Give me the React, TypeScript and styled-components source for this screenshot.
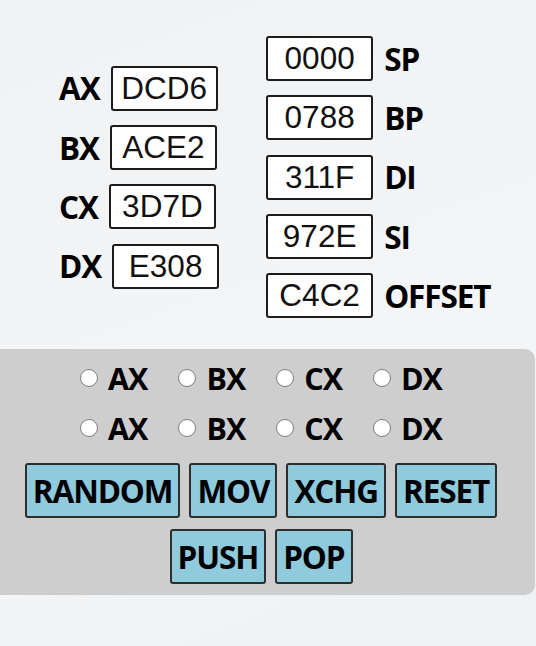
import React from "react";
import styled, { createGlobalStyle } from "styled-components";

const GlobalStyle = createGlobalStyle`
    html, body {
        margin: 0;
        padding: 0;
        background-color: #f1f3f5;
        overflow: hidden;
    }
    body {
        font-family: "Open Sans", "Liberation Sans", sans-serif;
        color: #000;
    }
`

const Page = styled.div`
    width: 536px;
    height: 646px;
    background: linear-gradient(160deg, #f0f2f4 0%, #f3f5f7 60%, #eff2f4 100%);
    padding-top: 36px;
    box-sizing: border-box;
`

const Registers = styled.div`
    display: flex;
    align-items: center;
    gap: 47px;
    padding-left: 59px;
`

const Column = styled.div`
    display: flex;
    flex-direction: column;
    gap: 14.3px;
`

const RegRow = styled.div`
    display: flex;
    align-items: center;
    gap: 11px;
    height: 45px;
`

const RegName = styled.span`
    font-family: "Open Sans", sans-serif;
    font-weight: 700;
    font-size: 31.5px;
    letter-spacing: -1.1px;
    line-height: 1;
`

const ValueBox = styled.div`
    width: 103px;
    height: 41px;
    border: 2px solid #1c1c1c;
    border-radius: 3px;
    background-color: #fff;
    display: flex;
    align-items: center;
    justify-content: center;
    font-family: "Liberation Sans", Arial, sans-serif;
    font-size: 31.5px;
    color: #111;
`

const Panel = styled.div`
    margin-top: 31px;
    margin-left: -13px;
    width: 548px;
    background-color: #cececf;
    border-radius: 10px;
    padding: 4px 0 11px;
    box-sizing: border-box;
    display: flex;
    flex-direction: column;
    align-items: center;
`

const RadioRow = styled.div`
    display: flex;
    align-items: center;
    gap: 31px;
    height: 50px;
`

const RadioLabel = styled.label`
    display: flex;
    align-items: center;
    gap: 10px;
    font-family: "Open Sans", sans-serif;
    font-weight: 700;
    font-size: 30.5px;
    letter-spacing: -1px;
`

const Radio = styled.input`
    appearance: none;
    margin: 0;
    width: 18px;
    height: 18px;
    border-radius: 50%;
    border: 1px solid #7d7d7d;
    background-color: #fff;
    box-sizing: border-box;
`

const ButtonRow = styled.div`
    display: flex;
    justify-content: center;
    gap: 9px;
    margin-top: ${(p: { $top: number }) => p.$top}px;
`

const Button = styled.button`
    height: 55px;
    padding: 0 6px;
    background-color: #8fcadd;
    border: 2px solid #2e2e2e;
    border-radius: 3px;
    font-family: "Open Sans", sans-serif;
    font-weight: 700;
    font-size: 31.5px;
    letter-spacing: -1.1px;
    color: #000;
`

const leftRegs = [
    ["AX", "DCD6"],
    ["BX", "ACE2"],
    ["CX", "3D7D"],
    ["DX", "E308"],
]

const rightRegs = [
    ["SP", "0000"],
    ["BP", "0788"],
    ["DI", "311F"],
    ["SI", "972E"],
    ["OFFSET", "C4C2"],
]

const names = ["AX", "BX", "CX", "DX"]

export default function App() {
    return (
        <Page>
            <GlobalStyle />
            <Registers>
                <Column>
                    {leftRegs.map(([name, value]) => (
                        <RegRow key={name}>
                            <RegName>{name}</RegName>
                            <ValueBox>{value}</ValueBox>
                        </RegRow>
                    ))}
                </Column>
                <Column>
                    {rightRegs.map(([name, value]) => (
                        <RegRow key={name}>
                            <ValueBox>{value}</ValueBox>
                            <RegName>{name}</RegName>
                        </RegRow>
                    ))}
                </Column>
            </Registers>
            <Panel>
                {["src", "dst"].map(group => (
                    <RadioRow key={group}>
                        {names.map(n => (
                            <RadioLabel key={n}>
                                <Radio type="radio" name={group} value={n} />
                                {n}
                            </RadioLabel>
                        ))}
                    </RadioRow>
                ))}
                <ButtonRow $top={10}>
                    <Button>RANDOM</Button>
                    <Button>MOV</Button>
                    <Button>XCHG</Button>
                    <Button>RESET</Button>
                </ButtonRow>
                <ButtonRow $top={11}>
                    <Button>PUSH</Button>
                    <Button>POP</Button>
                </ButtonRow>
            </Panel>
        </Page>
    );
}
